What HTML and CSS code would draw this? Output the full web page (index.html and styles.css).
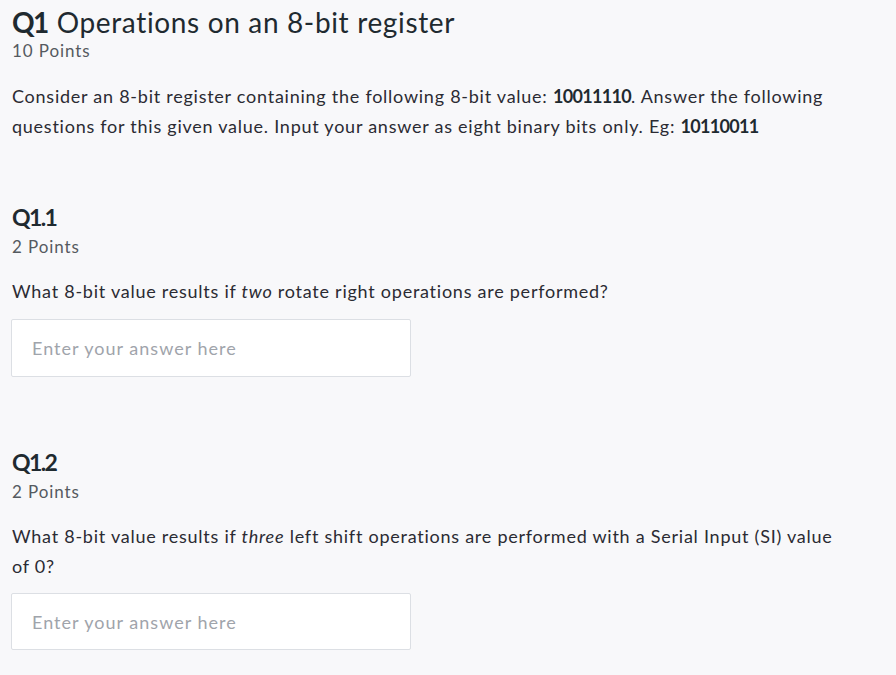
FILE: index.html
```html
<!DOCTYPE html>
<html>
<head>
<meta charset="utf-8">
<link rel="stylesheet" href="styles.css">
</head>
<body>
<div class="page">
  <section class="question">
    <h1 class="q-title"><strong>Q1</strong> Operations on an 8-bit register</h1>
    <div class="points points-main">10 Points</div>
    <p class="prompt">Consider an 8-bit register containing the following 8-bit value: <strong>10011110</strong>. Answer the following questions for this given value. Input your answer as eight binary bits only. Eg: <strong>10110011</strong></p>
  </section>
  <section class="subquestion">
    <h2 class="sub-title">Q1.1</h2>
    <div class="points">2 Points</div>
    <p class="prompt">What 8-bit value results if <em>two</em> rotate right operations are performed?</p>
    <input class="answer" type="text" placeholder="Enter your answer here">
  </section>
  <section class="subquestion">
    <h2 class="sub-title">Q1.2</h2>
    <div class="points">2 Points</div>
    <p class="prompt">What 8-bit value results if <em>three</em> left shift operations are performed with a Serial Input (SI) value of 0?</p>
    <input class="answer answer-multi" type="text" placeholder="Enter your answer here">
  </section>
</div>
</body>
</html>
```
FILE: styles.css
```css
html, body {
  margin: 0;
  padding: 0;
  background: #f8f8fa;
}
body {
  font-family: "Lato", "Liberation Sans", sans-serif;
  color: #2b2b33;
}
.page {
  padding: 4px 12px 0 12px;
  width: 822px;
}
.q-title {
  margin: 0;
  font-size: 28px;
  font-weight: 400;
  line-height: 36px;
  letter-spacing: 0.65px;
  color: #1f2a30;
}
.q-title strong {
  font-weight: 700;
  letter-spacing: -1.5px;
  margin-right: 1px;
}
.points {
  font-size: 17px;
  line-height: 22px;
  letter-spacing: 0.9px;
  color: #555a60;
}
.prompt {
  margin: 0;
  font-size: 18px;
  line-height: 30px;
  letter-spacing: 0.75px;
  color: #2b2b33;
}
.points-main {
  margin-bottom: 19px;
}
.prompt strong {
  font-weight: 700;
  letter-spacing: -0.7px;
  color: #1f2a30;
}
.subquestion {
  margin-top: 61px;
  padding-bottom: 9px;
}
.sub-title {
  margin: 0 0 4px 0;
  font-size: 23px;
  font-weight: 700;
  line-height: 30px;
  letter-spacing: -1.6px;
  color: #1f2a30;
}
.subquestion .points {
  margin-bottom: 18px;
}
.answer {
  display: block;
  box-sizing: border-box;
  width: 400px;
  height: 58px;
  margin: 13px 0 0 -1px;
  padding: 0 20px;
  border: 1px solid #dcdfe4;
  border-radius: 2px;
  background: #ffffff;
  font-family: inherit;
  font-size: 18px;
  letter-spacing: 1px;
  color: #2b2b33;
}
.answer-multi {
  margin-top: 12px;
  height: 57px;
}
.answer::placeholder {
  color: #9fa4ab;
}
```
